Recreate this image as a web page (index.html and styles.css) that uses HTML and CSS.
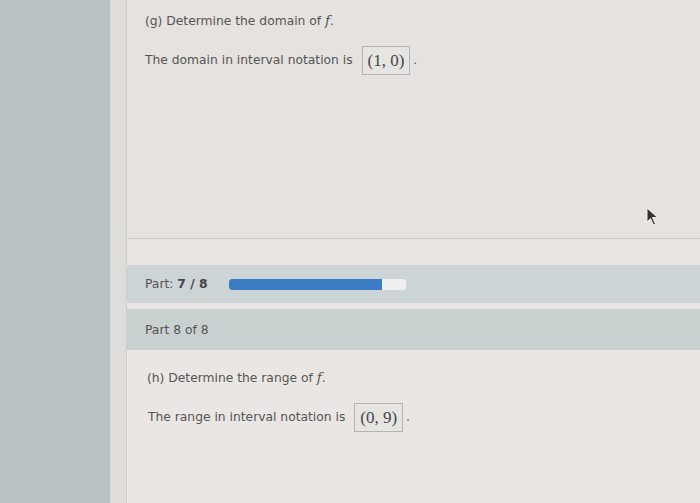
FILE: index.html
```html
<!DOCTYPE html>
<html>
<head>
<meta charset="utf-8">
<link rel="stylesheet" href="styles.css">
</head>
<body>
<div class="page">
  <aside class="sidebar"></aside>
  <div class="strip"></div>
  <main class="main">
    <section class="card top">
      <p class="q">(g) Determine the domain of <i class="f">f</i>.</p>
      <p class="ans">The domain in interval notation is <span class="box">(1, 0)</span>.</p>
    </section>
    <div class="gap1"></div>
    <section class="partbar">
      <span class="plabel">Part: <b>7 / 8</b></span>
      <span class="prog"><span class="fill" style="width:87%"></span></span>
    </section>
    <div class="gap2"></div>
    <section class="phead">Part 8 of 8</section>
    <section class="card bottom">
      <p class="q">(h) Determine the range of <i class="f">f</i>.</p>
      <p class="ans">The range in interval notation is <span class="box">(0, 9)</span>.</p>
    </section>
  </main>
  <svg class="cursor" width="14" height="20" viewBox="0 0 14 20"><path d="M1 1 L1 15 L4.5 11.5 L7.5 18 L9.5 17 L6.5 10.5 L11.5 10.5 Z" fill="#333" stroke="#eee" stroke-width="1"/></svg>
</div>
</body>
</html>
```
FILE: styles.css
```css
html, body { margin: 0; padding: 0; }
body { width: 700px; height: 503px; overflow: hidden; background: #e6e2df; font-family: "DejaVu Sans", Verdana, sans-serif; color: #555; }
.page { display: flex; height: 503px; position: relative; }
.sidebar { width: 110px; background: #bac2c3; flex: none; }
.strip { width: 16px; background: #dfddd9; border-right: 1px solid #cfcdca; flex: none; }
.main { flex: 1; display: flex; flex-direction: column; }
.card { background: #e6e2df; }
.top { height: 239px; border-bottom: 1px solid #cdcbc7; padding: 0 0 0 18px; box-sizing: border-box; flex: none; }
.q { margin: 0; font-size: 12.3px; line-height: 16px; }
.top .q { padding-top: 12px; }
.ans { margin: 0; font-size: 12.3px; line-height: 30px; height: 30px; }
.top .ans { padding-top: 16px; }
.bottom .ans { padding-left: 1px; }
.f { font-family: "DejaVu Serif", "Liberation Serif", serif; font-size: 13.5px; }
.box { display: inline-block; border: 1px solid #b4b4b0; padding: 4px 5px 3px 5px; font-family: "Liberation Serif", "DejaVu Serif", serif; font-size: 17px; line-height: 20px; color: #444; background: #e7e5e2; vertical-align: middle; margin-left: 5px; margin-right: 3px; }
.gap1 { height: 26px; background: #e7e4e1; flex: none; }
.partbar { height: 38px; background: #cdd4d6; display: flex; align-items: center; padding-left: 18px; gap: 21px; border-radius: 3px 0 0 3px; flex: none; }
.plabel { font-size: 12.3px; color: #555; }
.plabel b { font-weight: bold; color: #444; }
.prog { width: 177px; height: 11px; background: #eef0f0; border-radius: 3px; overflow: hidden; display: flex; }
.fill { background: #3b7dc5; height: 11px; }
.gap2 { height: 6px; background: #e7e4e1; flex: none; }
.phead { height: 41px; background: #c9d0d0; display: flex; align-items: center; padding-left: 18px; font-size: 12.3px; color: #555; flex: none; }
.bottom { flex: 1; padding-left: 20px; background: #e9e6e3; }
.bottom .q { padding-top: 19px; }
.bottom .ans { padding-top: 16px; }
.cursor { position: absolute; left: 646px; top: 207px; }
```
